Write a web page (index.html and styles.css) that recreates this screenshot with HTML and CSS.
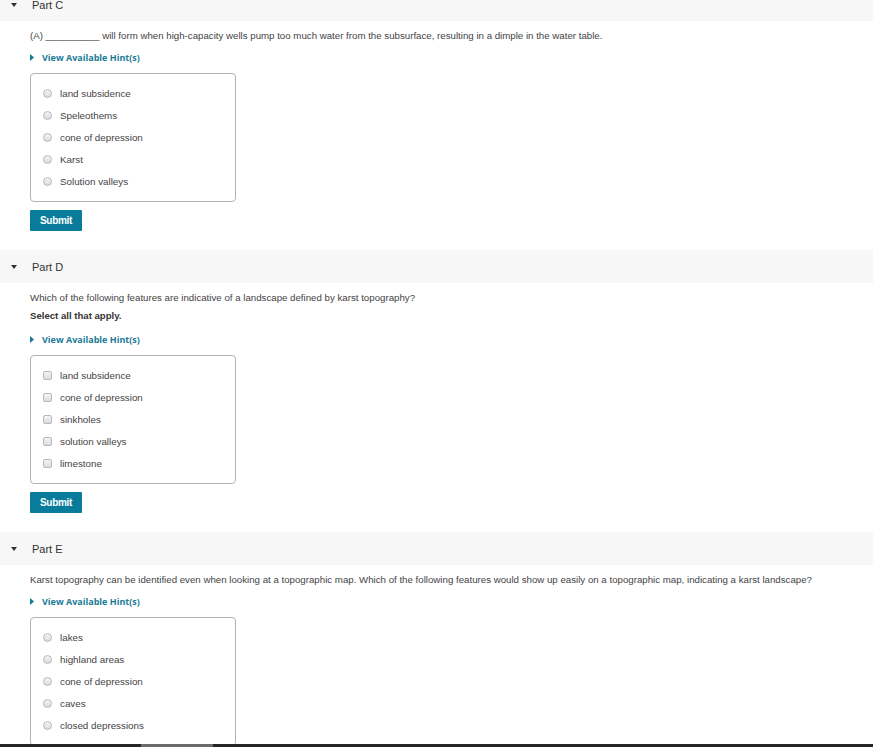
FILE: index.html
```html
<!DOCTYPE html>
<html>
<head>
<meta charset="utf-8">
<link rel="stylesheet" href="styles.css">
</head>
<body>
<div class="part first">
  <div class="part-head">
    <svg class="caret" width="6" height="4" viewBox="0 0 6 4"><polygon points="0,0 6,0 3,4" fill="#333"/></svg>
    <span class="part-title">Part C</span>
  </div>
  <div class="part-body">
    <p class="q">(A) <span class="blank">__________</span> will form when high-capacity wells pump too much water from the subsurface, resulting in a dimple in the water table.</p>
    <div class="hint"><svg class="hint-caret" width="4" height="7" viewBox="0 0 4 7"><polygon points="0,0 4,3.5 0,7" fill="#1a7a96"/></svg><span>View Available Hint(s)</span></div>
    <div class="options">
      <label class="opt"><span class="radio"></span>land subsidence</label>
      <label class="opt"><span class="radio"></span>Speleothems</label>
      <label class="opt"><span class="radio"></span>cone of depression</label>
      <label class="opt"><span class="radio"></span>Karst</label>
      <label class="opt"><span class="radio"></span>Solution valleys</label>
    </div>
    <button class="submit">Submit</button>
  </div>
</div>

<div class="part">
  <div class="part-head">
    <svg class="caret" width="6" height="4" viewBox="0 0 6 4"><polygon points="0,0 6,0 3,4" fill="#333"/></svg>
    <span class="part-title">Part D</span>
  </div>
  <div class="part-body">
    <p class="q">Which of the following features are indicative of a landscape defined by karst topography?</p>
    <p class="select">Select all that apply.</p>
    <div class="hint after-select"><svg class="hint-caret" width="4" height="7" viewBox="0 0 4 7"><polygon points="0,0 4,3.5 0,7" fill="#1a7a96"/></svg><span>View Available Hint(s)</span></div>
    <div class="options">
      <label class="opt"><span class="check"></span>land subsidence</label>
      <label class="opt"><span class="check"></span>cone of depression</label>
      <label class="opt"><span class="check"></span>sinkholes</label>
      <label class="opt"><span class="check"></span>solution valleys</label>
      <label class="opt"><span class="check"></span>limestone</label>
    </div>
    <button class="submit">Submit</button>
  </div>
</div>

<div class="part">
  <div class="part-head">
    <svg class="caret" width="6" height="4" viewBox="0 0 6 4"><polygon points="0,0 6,0 3,4" fill="#333"/></svg>
    <span class="part-title">Part E</span>
  </div>
  <div class="part-body">
    <p class="q">Karst topography can be identified even when looking at a topographic map. Which of the following features would show up easily on a topographic map, indicating a karst landscape?</p>
    <div class="hint"><svg class="hint-caret" width="4" height="7" viewBox="0 0 4 7"><polygon points="0,0 4,3.5 0,7" fill="#1a7a96"/></svg><span>View Available Hint(s)</span></div>
    <div class="options">
      <label class="opt"><span class="radio"></span>lakes</label>
      <label class="opt"><span class="radio"></span>highland areas</label>
      <label class="opt"><span class="radio"></span>cone of depression</label>
      <label class="opt"><span class="radio"></span>caves</label>
      <label class="opt"><span class="radio"></span>closed depressions</label>
    </div>
  </div>
</div>

<div class="scrollbar"><div class="thumb"></div></div>
</body>
</html>
```

FILE: styles.css
```css
html, body {
  margin: 0;
  padding: 0;
  background: #fff;
  overflow: hidden;
}
body {
  font-family: "Liberation Sans", Arial, sans-serif;
  color: #333;
  width: 873px;
  height: 747px;
}
.part.first {
  margin-top: -12px;
}
.part-head {
  height: 33px;
  background: #f7f7f7;
  display: flex;
  align-items: center;
}
.caret {
  margin-left: 11px;
  margin-right: 15px;
}
.part-title {
  font-size: 11px;
  color: #333;
}
.part-body {
  padding: 9px 0 19px 30px;
}
.q {
  margin: 0;
  font-size: 9.7px;
  line-height: 12px;
  color: #444;
}
.select {
  margin: 6px 0 0;
  font-size: 9.6px;
  line-height: 12px;
  font-weight: bold;
  color: #333;
}
.hint {
  display: flex;
  align-items: center;
  margin-top: 9px;
  height: 12px;
  font-family: "Open Sans", "Liberation Sans", sans-serif;
  font-size: 9px;
  font-weight: 700;
  color: #1a7a96;
}
.hint.after-select {
  margin-top: 11px;
}
.hint-caret {
  margin-right: 8px;
}
.options {
  margin-top: 10px;
  width: 204px;
  border: 1px solid #b3b3b3;
  border-radius: 4px;
  padding: 8px 0 9px;
  display: flex;
  flex-direction: column;
}
.opt {
  display: flex;
  align-items: center;
  height: 22px;
  padding-left: 12px;
  font-size: 9.8px;
  color: #444;
}
.radio {
  width: 7px;
  height: 7px;
  border-radius: 50%;
  border: 1px solid #b8b8b8;
  background: linear-gradient(#f4f4f4, #dcdcdc);
  margin-right: 8px;
  flex: none;
}
.check {
  width: 7px;
  height: 7px;
  border-radius: 2px;
  border: 1px solid #b8b8b8;
  background: linear-gradient(#f4f4f4, #dcdcdc);
  margin-right: 8px;
  flex: none;
}
.submit {
  display: block;
  margin-top: 8px;
  width: 52px;
  height: 21px;
  padding: 0;
  border: none;
  border-radius: 1px;
  background: #097c9b;
  color: #fff;
  font-family: "Liberation Sans", Arial, sans-serif;
  font-size: 10px;
  font-weight: bold;
  letter-spacing: -0.3px;
}
.scrollbar {
  position: fixed;
  left: 0;
  right: 0;
  bottom: 0;
  height: 3px;
  background: #262626;
}
.thumb {
  margin-left: 141px;
  width: 72px;
  height: 3px;
  background: #6a6a6a;
}
```
